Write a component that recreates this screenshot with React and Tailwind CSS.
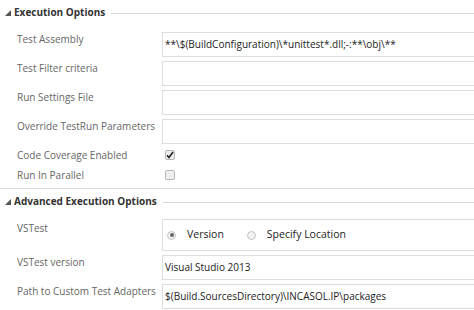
import React from "react";

const font = { fontFamily: '"Open Sans", "Noto Sans", sans-serif' };

const SectionHeader = ({ title }) => (
  <div className="flex items-center h-[24px]">
    <svg width="6" height="6" viewBox="0 0 6 6" className="ml-[5px] mr-[3px] mt-[2px]">
      <polygon points="6,0 6,6 0,6" fill="#555" />
    </svg>
    <span className="text-[10px] font-bold text-[#333] leading-none">{title}</span>
    <div className="flex-1 h-px bg-[#d8d8d8] ml-[6px] mt-[2px]" />
  </div>
);

const TextRow = ({ label, value }) => (
  <div className="flex">
    <div className="w-[162px] shrink-0 pl-[17px] pt-[1px] text-[10px] text-[#666] leading-[13px]">
      {label}
    </div>
    <div className="flex-1 h-[25px] border border-[#dedede] border-r-0 flex items-center pl-[2px] text-[10px] text-[#222] whitespace-nowrap overflow-hidden">
      {value}
    </div>
  </div>
);

const Checkbox = ({ checked }) => (
  <span className="w-[10px] h-[10px] border border-[#b8b8b8] bg-[#eeeeee] rounded-[2px] flex items-center justify-center">
    {checked && (
      <svg width="8" height="8" viewBox="0 0 8 8">
        <path d="M1 4.2 L3 6.5 L7 1" stroke="#222" strokeWidth="1.6" fill="none" />
      </svg>
    )}
  </span>
);

const CheckRow = ({ label, checked }) => (
  <div className="flex items-center h-[20px]">
    <div className="w-[165px] shrink-0 pl-[17px] text-[10px] text-[#666]">{label}</div>
    <Checkbox checked={checked} />
  </div>
);

const Radio = ({ selected }) => (
  <span className="w-[9px] h-[9px] rounded-full border border-[#c4c4c4] bg-[#f2f2f2] flex items-center justify-center">
    {selected && <span className="w-[4px] h-[4px] rounded-full bg-[#666]" />}
  </span>
);

export default function App() {
  return (
    <div className="w-[474px] h-[310px] bg-white overflow-hidden" style={font}>
      <SectionHeader title="Execution Options" />
      <div className="flex flex-col gap-[4px] mt-[8px]">
        <TextRow label="Test Assembly" value="**\$(BuildConfiguration)\*unittest*.dll;-:**\obj\**" />
        <TextRow label="Test Filter criteria" value="" />
        <TextRow label="Run Settings File" value="" />
        <TextRow label="Override TestRun Parameters" value="" />
      </div>
      <div className="mt-[1px]">
        <CheckRow label="Code Coverage Enabled" checked />
        <CheckRow label="Run In Parallel" />
      </div>
      <div className="h-px bg-[#dcdcdc] mt-[3px]" />
      <SectionHeader title="Advanced Execution Options" />
      <div className="flex flex-col gap-[4px] mt-[6px]">
        <div className="flex">
          <div className="w-[162px] shrink-0 pl-[17px] pt-[3px] text-[10px] text-[#666] leading-[13px]">VSTest</div>
          <div className="flex-1 h-[32px] border border-[#dedede] border-r-0 flex items-center pl-[4px] text-[10.5px] text-[#222]">
            <Radio selected />
            <span className="ml-[11px]">Version</span>
            <span className="ml-[23px]"><Radio /></span>
            <span className="ml-[11px]">Specify Location</span>
          </div>
        </div>
        <TextRow label="VSTest version" value="Visual Studio 2013" />
        <TextRow label="Path to Custom Test Adapters" value="$(Build.SourcesDirectory)\INCASOL.IP\packages" />
      </div>
    </div>
  );
}
